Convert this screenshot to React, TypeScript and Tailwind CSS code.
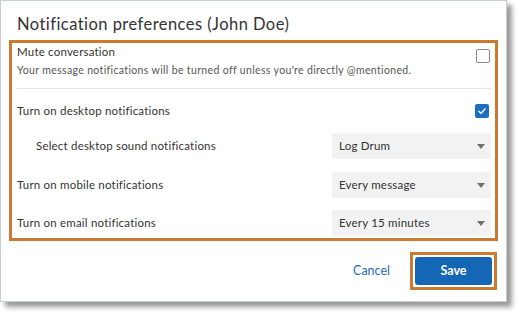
import React, { useState } from 'react'

const Caret = () => (
  <svg width="8" height="5" viewBox="0 0 8 5" className="shrink-0">
    <path d="M0 0 L8 0 L4 5 Z" fill="#707070" />
  </svg>
)

const Select = ({ value }: { value: string }) => (
  <div className="flex items-center justify-between w-[159px] h-[26px] bg-[#f2f2f2] rounded-[3px] pl-[7px] pr-[6px] text-[11.5px] tracking-[0.2px] text-[#333]">
    <span>{value}</span>
    <Caret />
  </div>
)

const Checkbox = ({ checked, onToggle }: { checked: boolean; onToggle: () => void }) =>
  checked ? (
    <button onClick={onToggle} className="w-[14px] h-[14px] rounded-[2px] bg-[#1b6ec2] flex items-center justify-center">
      <svg width="10" height="8" viewBox="0 0 10 8">
        <path d="M1.5 4 L4 6.3 L8.5 1.5" stroke="white" strokeWidth="1.4" fill="none" />
      </svg>
    </button>
  ) : (
    <button onClick={onToggle} className="w-[14px] h-[14px] rounded-[2px] border border-[#8c8c8c] bg-white" />
  )

export default function App() {
  const [muted, setMuted] = useState(false)
  const [desktop, setDesktop] = useState(true)

  return (
    <div className="w-[519px] h-[314px] bg-white font-['Lato','Liberation_Sans',sans-serif] text-[#333]">
      <div className="w-[507px] h-[302px] border border-[#c9ced4] bg-white shadow-[5px_5px_5px_rgba(0,0,0,0.4)] flex flex-col">
        {/* header */}
        <div className="pt-[13px] pl-[16px] text-[16.5px] tracking-[0.45px] leading-[20px] text-[#333]">
          Notification preferences (John Doe)
        </div>

        {/* settings */}
        <div className="mt-[6px] mx-[8px] border-[3px] border-[#cb7a32] pl-[5px] pr-[4px] pb-[2px] text-[11.5px] tracking-[0.2px]">
          <div className="flex justify-between h-[45px]">
            <div className="pt-[1px]">
              <div className="leading-[16px]">Mute conversation</div>
              <div className="mt-[3px] text-[10.5px] tracking-[0.35px] leading-[14px] text-[#555]">
                Your message notifications will be turned off unless you're directly @mentioned.
              </div>
            </div>
            <div className="mt-[6px] mr-[1px] flex">
              <Checkbox checked={muted} onToggle={() => setMuted(!muted)} />
            </div>
          </div>
          <div className="border-t border-[#e3e3e3]" />

          <div className="flex items-center justify-between h-[28px] mt-[8px]">
            <span>Turn on desktop notifications</span>
            <div className="mr-[2px] flex">
              <Checkbox checked={desktop} onToggle={() => setDesktop(!desktop)} />
            </div>
          </div>
          <div className="flex items-center justify-between h-[26px] mt-[8px]">
            <span className="pl-[19px]">Select desktop sound notifications</span>
            <Select value="Log Drum" />
          </div>
          <div className="flex items-center justify-between h-[26px] mt-[13px]">
            <span>Turn on mobile notifications</span>
            <Select value="Every message" />
          </div>
          <div className="flex items-center justify-between h-[26px] mt-[12px]">
            <span>Turn on email notifications</span>
            <Select value="Every 15 minutes" />
          </div>
        </div>

        {/* footer */}
        <div className="mt-[11px] mr-[9px] flex items-center justify-end gap-[20px]">
          <button className="text-[12.5px] text-[#1f6db3]">Cancel</button>
          <div className="border-[3px] border-[#cb7a32] p-[2px] bg-white">
            <button className="w-[77px] h-[28px] rounded-[3px] bg-[#1467b5] text-white text-[12.5px] font-bold">
              Save
            </button>
          </div>
        </div>
      </div>
    </div>
  )
}
